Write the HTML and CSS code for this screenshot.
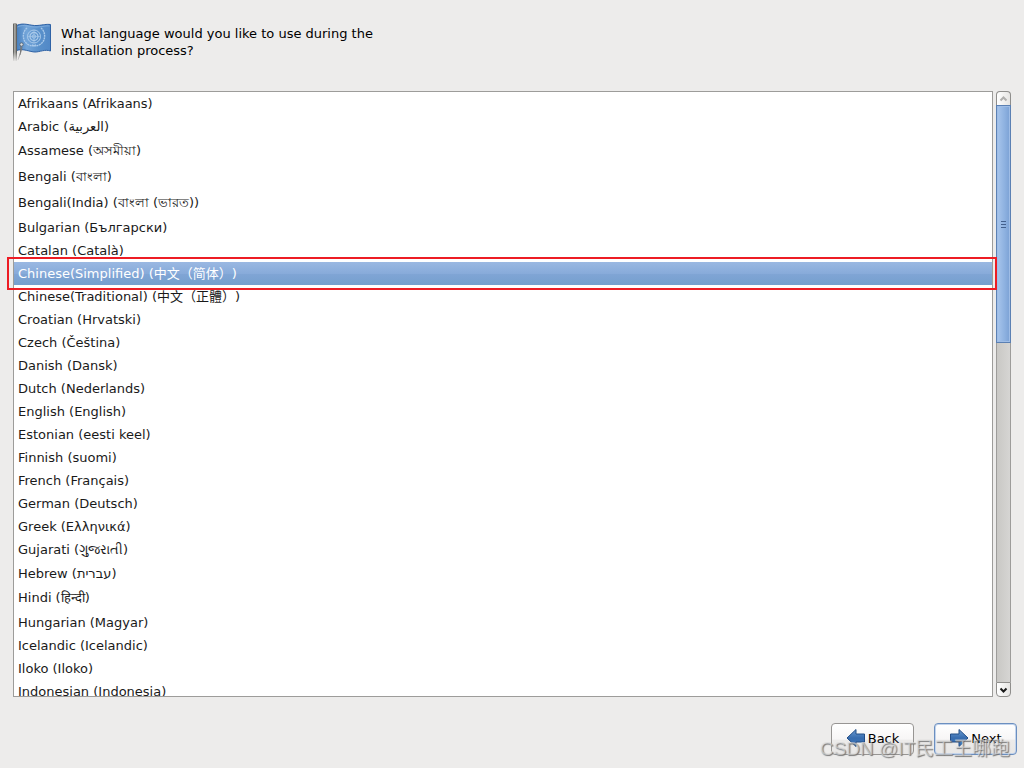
FILE: index.html
```
<!DOCTYPE html>
<html lang="en">
<head>
<meta charset="utf-8">
<title>Installer language</title>
<link rel="stylesheet" href="styles.css">
</head>
<body>
<main class="installer">
  <header class="intro">
    <svg class="flag" viewBox="0 0 40 40" aria-hidden="true">
      <defs>
        <linearGradient id="pole" x1="0" x2="1" y1="0" y2="0"><stop offset="0" stop-color="#484848"/><stop offset=".45" stop-color="#b5b5af"/><stop offset="1" stop-color="#4c4c4c"/></linearGradient>
        <linearGradient id="fade" x1="0" x2="0" y1="0" y2="1"><stop offset="0" stop-color="#edeceb" stop-opacity="0"/><stop offset="1" stop-color="#edeceb"/></linearGradient>
        <linearGradient id="cloth" x1="0" x2="1" y1="0" y2="0"><stop offset="0" stop-color="#477fbe"/><stop offset=".3" stop-color="#73a5d9"/><stop offset=".65" stop-color="#5a91cb"/><stop offset="1" stop-color="#5188c7"/></linearGradient>
      </defs>
      <path d="M4.500 3.500C12 0 18 4 25 3.500S34 2 38.500 2.500V29C33 27 28 30 23 30S11 26 4.500 28.500Z" fill="url(#cloth)" stroke="#2f62a5"/>
      <path d="M5.500 5C12 1.500 18 5.500 25 5S34 3.500 37.500 4" fill="none" stroke="#86b2e2" stroke-width=".8"/>
      <g fill="none" stroke="#a9c9ea">
        <circle cx="22" cy="14.500" r="6.500"/><circle cx="22" cy="14.500" r="4" stroke-width="1.300"/>
        <circle cx="22" cy="14.500" r="1.700"/>
        <path d="M15 6C10 10 10 19 16 22.500Q20 25 24 23M29 6C34 10 34 19 28 22.500Q24 25 20 23" stroke-width="1.400" stroke-dasharray="2 .6"/>
        <path d="M22 8v13M15.500 14.500h13" stroke-width=".6"/>
      </g>
      <path d="M1 2Q2.500 0 5 2V39H1Z" fill="url(#pole)"/>
      <path d="M9 23Q9.500 31 6 38M10 25L8 33" fill="none" stroke="#777"/>
      <circle cx="9.500" cy="22.500" r="1.700" fill="#d8dce0" stroke="#4b5967" stroke-width=".8"/>
      <path d="M0 30h10v10H0z" fill="url(#fade)"/>
    </svg>
    <label class="question" for="language">What language would you like to use during the installation process?</label>
  </header>

  <section class="picker">
    <select class="languages" id="language" size="26">
      <option>Afrikaans (Afrikaans)</option>
      <option>Arabic (العربية)</option>
      <option class="tall">Assamese (অসমীয়া)</option>
      <option class="tall">Bengali (বাংলা)</option>
      <option class="tall">Bengali(India) (বাংলা (ভারত))</option>
      <option>Bulgarian (Български)</option>
      <option>Catalan (Català)</option>
      <option class="cjk" selected>Chinese(Simplified) (中文（简体）)</option>
      <option class="cjk">Chinese(Traditional) (中文（正體）)</option>
      <option>Croatian (Hrvatski)</option>
      <option>Czech (Čeština)</option>
      <option>Danish (Dansk)</option>
      <option>Dutch (Nederlands)</option>
      <option>English (English)</option>
      <option>Estonian (eesti keel)</option>
      <option>Finnish (suomi)</option>
      <option>French (Français)</option>
      <option>German (Deutsch)</option>
      <option>Greek (Ελληνικά)</option>
      <option class="medium">Gujarati (ગુજરાતી)</option>
      <option>Hebrew (עברית)</option>
      <option class="tall">Hindi (हिन्दी)</option>
      <option>Hungarian (Magyar)</option>
      <option>Icelandic (Icelandic)</option>
      <option>Iloko (Iloko)</option>
      <option>Indonesian (Indonesia)</option>
    </select>
    <div class="scrollbar">
      <button class="step step-up" type="button" aria-label="Scroll up" disabled>
        <svg viewBox="0 0 9 6" aria-hidden="true"><path d="M1.500 4.500 4.500 1.500 7.500 4.500"/></svg>
      </button>
      <div class="track"><div class="thumb"><i></i><i></i><i></i></div></div>
      <button class="step step-down" type="button" aria-label="Scroll down">
        <svg viewBox="0 0 9 6" aria-hidden="true"><path d="M1.500 1.500 4.500 4.500 7.500 1.500"/></svg>
      </button>
    </div>
    <div class="highlight"></div>
  </section>

  <footer class="actions">
    <button class="action" type="button">
      <svg class="arrow" viewBox="0 0 20 20" aria-hidden="true"><defs><linearGradient id="blue" x1="0" x2="0" y1="0" y2="1"><stop offset="0" stop-color="#6b9bd2"/><stop offset=".5" stop-color="#386daf"/><stop offset="1" stop-color="#3d76bb"/></linearGradient></defs><path d="M1 10 10 1.500V6H18.500V14H10V18.500Z" fill="url(#blue)" stroke="#234e87"/></svg>
      Back
    </button>
    <button class="action action-default" type="button">
      <svg class="arrow" viewBox="0 0 20 20" aria-hidden="true"><path d="M19 10 10 1.500V6H1.500V14H10V18.500Z" fill="url(#blue)" stroke="#234e87"/></svg>
      Next
    </button>
    <span class="watermark">CSDN @IT民工王哪跑</span>
  </footer>
</main>
</body>
</html>
```

FILE: styles.css
```
* { box-sizing: border-box; }

body {
  margin: 0;
  background: #edeceb;
  color: #000;
  font: 13px/17px "DejaVu Sans", "Noto Sans CJK SC", sans-serif;
}

.installer {
  display: flex;
  flex-direction: column;
  height: 100vh;
}

.intro {
  display: flex;
  gap: 9px;
  height: 91px;
  padding: 22px 12px 0;
}

.flag { width: 40px; height: 40px; }

.question { max-width: 330px; padding-top: 3px; }

.picker {
  position: relative;
  display: flex;
  flex: 1;
  gap: 3px;
  min-height: 0;
  padding: 0 13px;
}

.languages {
  flex: 1;
  min-width: 0;
  height: 100%;
  padding: 0;
  border: 1px solid #9d9c9a;
  border-radius: 0;
  outline: 0;
  background: #fff;
  color: #1a1a1a;
  font: inherit;
  overflow: hidden;
  scrollbar-width: none;
}

.languages option {
  height: 23px;
  min-height: 23px;
  padding: 4px 4px 0;
  color: #1a1a1a;
}

.languages .medium { height: 24px; }
.languages .tall { height: 26px; padding-top: 3px; }
.languages .cjk { padding-top: 1px; text-spacing-trim: space-all; }

.languages option:checked {
  background: linear-gradient(#9ab8e2, #88abda 50%, #80a5d5 52%, #759fce);
  color: #fff;
}

.scrollbar {
  display: flex;
  flex-direction: column;
  width: 15px;
}

.step {
  display: flex;
  align-items: center;
  justify-content: center;
  height: 15px;
  padding: 0;
  border: 1px solid #8f8e8c;
  background: linear-gradient(90deg, #fff, #e6e5e3);
}

.step-up { height: 14px; border-bottom: 0; border-radius: 4px 4px 0 0; }
.step-down { border-radius: 0 0 4px 4px; }

.step svg {
  width: 9px;
  height: 6px;
  fill: none;
  stroke: #1a1a1a;
  stroke-width: 2;
}

.step-up svg { stroke: #b0afad; }

.track {
  flex: 1;
  border: solid #9d9c9a;
  border-width: 0 1px;
  background: linear-gradient(90deg, #c9c8c5, #d6d5d3);
}

.thumb {
  display: flex;
  flex-direction: column;
  align-items: center;
  justify-content: center;
  gap: 2px;
  height: 238px;
  margin: 0 -1px;
  border: 1px solid #5b80b3;
  background: linear-gradient(90deg, #a9c6ec, #8db1e0 60%, #7ba1d4);
  box-shadow: inset 0 0 0 1px #9fbde6;
}

.thumb i { width: 5px; height: 1px; background: #43608c; }

.highlight {
  position: absolute;
  top: 166px;
  left: 7px;
  right: 27px;
  height: 33px;
  border: 2px solid #ed1c24;
  pointer-events: none;
}

.actions {
  position: relative;
  display: flex;
  justify-content: flex-end;
  gap: 20px;
  padding: 26px 7px 13px;
}

.action {
  display: flex;
  align-items: center;
  justify-content: center;
  gap: 2px;
  width: 83px;
  height: 32px;
  padding: 0 0 2px;
  border: 1px solid #979593;
  border-radius: 4px;
  background: linear-gradient(#fff, #f7f6f6 50%, #ecebea 55%, #e8e7e6);
  color: #000;
  font: inherit;
}

.action-default { border-color: #6b8fc0; box-shadow: inset 0 0 0 1px #c3d4ec; }

.arrow { width: 20px; height: 20px; }

.watermark {
  position: absolute;
  right: 14px;
  bottom: 6px;
  color: #dedede99;
  font: 19px/26px "Liberation Sans", "Noto Sans CJK SC", sans-serif;
  text-shadow: 1px 1px 1px #777;
  white-space: nowrap;
  pointer-events: none;
}
```
